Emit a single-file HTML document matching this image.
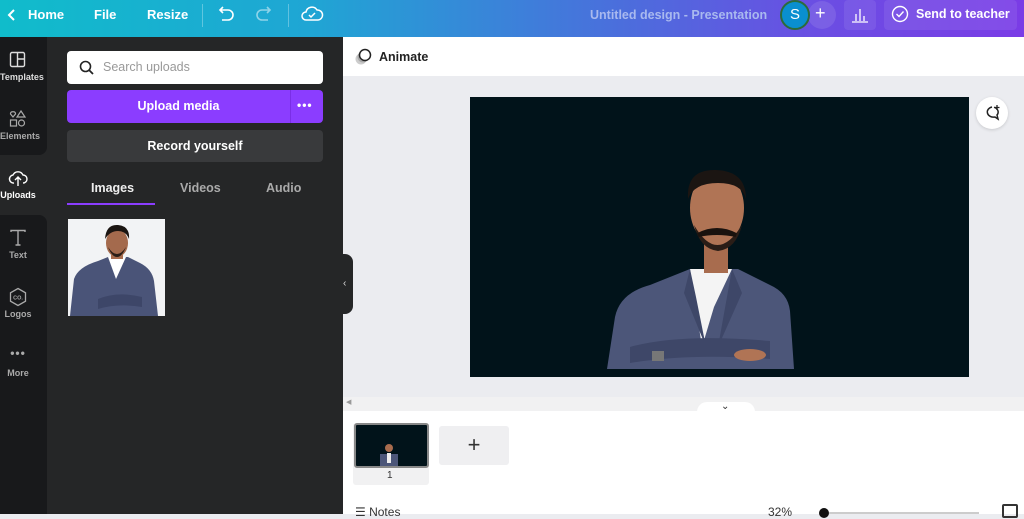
<!DOCTYPE html>
<html><head><meta charset="utf-8"><style>
*{margin:0;padding:0;box-sizing:border-box}
body{width:1024px;height:514px;overflow:hidden;font-family:"Liberation Sans",sans-serif;background:#ebecf0;position:relative}
.a{position:absolute}
.top{left:0;top:0;width:1024px;height:37px;background:linear-gradient(90deg,#10bccb 0%,#1fa6d4 30%,#4a6fdc 60%,#6b4ee3 80%,#7a3ce6 100%)}
.tt{color:#fff;font-weight:bold;font-size:13px;top:7px}
.rail{left:0;top:37px;width:47px;height:477px;background:#252627}
.rb{background:#18191b;left:0;width:47px}
.ri{left:0;width:36px;text-align:center;color:#ddd;font-size:9px;font-weight:bold;white-space:nowrap}
.panel{left:47px;top:37px;width:296px;height:477px;background:#252627}
</style></head><body>
<div class="a top"></div>
<svg class="a" style="left:5px;top:7px" width="12" height="16"><path d="M9 3 L4 8 L9 13" stroke="#fff" stroke-width="2" fill="none"/></svg>
<div class="a tt" style="left:28px">Home</div>
<div class="a tt" style="left:94px">File</div>
<div class="a tt" style="left:147px">Resize</div>
<div class="a" style="left:202px;top:4px;width:1px;height:23px;background:rgba(255,255,255,.3)"></div>
<div class="a" style="left:288px;top:4px;width:1px;height:23px;background:rgba(255,255,255,.3)"></div>
<svg class="a" style="left:216px;top:5px" width="20" height="18"><path d="M4 5 H12 A5 5 0 0 1 12 15 H6 M7 2 L4 5 L7 8" stroke="#fff" stroke-width="1.6" fill="none"/></svg>
<svg class="a" style="left:254px;top:5px" width="20" height="18"><path d="M16 5 H8 A5 5 0 0 0 8 15 H14 M13 2 L16 5 L13 8" stroke="rgba(255,255,255,.5)" stroke-width="1.6" fill="none"/></svg>
<svg class="a" style="left:300px;top:4px" width="24" height="20"><path d="M6 16 A4 4 0 0 1 6 8 A6 6 0 0 1 17 6 A5 5 0 0 1 18 16 Z M9 11 L11 13 L15 9" stroke="#fff" stroke-width="1.5" fill="none"/></svg>
<div class="a" style="left:590px;top:8px;color:#a9b9ef;font-size:12.5px;font-weight:bold">Untitled design - Presentation</div>
<div class="a" style="left:808px;top:1px;width:28px;height:28px;border-radius:50%;background:rgba(255,255,255,.1)"></div>
<div class="a" style="left:780px;top:0px;width:30px;height:30px;border-radius:50%;background:#0a8fd0;border:2px solid #2d6b3a;color:#fff;font-size:15px;text-align:center;line-height:26px">S</div>
<div class="a" style="left:815px;top:3px;color:#fff;font-size:18px">+</div>
<div class="a" style="left:844px;top:0;width:32px;height:30px;border-radius:4px;background:rgba(255,255,255,.08)"></div>
<svg class="a" style="left:850px;top:5px" width="20" height="20"><path d="M2 17 H18 M6 16 V9 M10 16 V4 M14 16 V11" stroke="#fff" stroke-width="1.3" fill="none"/></svg>
<div class="a" style="left:884px;top:0;width:133px;height:30px;border-radius:4px;background:rgba(255,255,255,.08)"></div>
<svg class="a" style="left:891px;top:5px" width="18" height="18"><circle cx="9" cy="9" r="7.5" stroke="#fff" stroke-width="1.4" fill="none"/><path d="M5.5 9 L8 11.5 L12.5 6.5" stroke="#fff" stroke-width="1.4" fill="none"/></svg>
<div class="a tt" style="left:916px;top:7px;font-size:12.5px">Send to teacher</div>

<div class="a rail"></div>
<div class="a rb" style="top:37px;height:118px;border-bottom-right-radius:8px"></div>
<div class="a rb" style="top:215px;height:299px;border-top-right-radius:8px"></div>
<svg class="a" style="left:9px;top:51px" width="18" height="18"><rect x="1.5" y="1.5" width="14" height="14" rx="1.5" stroke="#ddd" stroke-width="1.4" fill="none"/><path d="M8.5 1.5 V15.5 M8.5 8 H15.5" stroke="#ddd" stroke-width="1.4"/></svg>
<div class="a ri" style="top:72px">Templates</div>
<svg class="a" style="left:9px;top:110px" width="18" height="18"><path d="M4 7 L1.5 4 A2 2 0 0 1 4 1.8 A2 2 0 0 1 6.5 4 Z M12 1 L16 7 H8 Z" stroke="#aaa" stroke-width="1.2" fill="none"/><rect x="1.5" y="10" width="6" height="6" stroke="#aaa" stroke-width="1.2" fill="none"/><circle cx="12.5" cy="13" r="3" stroke="#aaa" stroke-width="1.2" fill="none"/></svg>
<div class="a ri" style="top:131px;color:#aaa">Elements</div>
<svg class="a" style="left:8px;top:169px" width="20" height="18"><path d="M6 14 A4 4 0 0 1 5 6 A5.5 5.5 0 0 1 15 6 A4 4 0 0 1 15 14 M10 17 V8 M7 11 L10 8 L13 11" stroke="#fff" stroke-width="1.4" fill="none"/></svg>
<div class="a ri" style="top:190px;color:#fff">Uploads</div>
<svg class="a" style="left:9px;top:229px" width="18" height="18"><path d="M2 3 V1.5 H16 V3 M9 1.5 V16 M6.5 16 H11.5" stroke="#aaa" stroke-width="1.4" fill="none"/></svg>
<div class="a ri" style="top:250px;color:#aaa">Text</div>
<svg class="a" style="left:8px;top:287px" width="20" height="20"><path d="M10 1.5 L17.5 5.8 V14.2 L10 18.5 L2.5 14.2 V5.8 Z" stroke="#aaa" stroke-width="1.3" fill="none"/><text x="10" y="12.5" font-size="5.5" fill="#aaa" text-anchor="middle" font-family="Liberation Sans" font-weight="bold">CO.</text></svg>
<div class="a ri" style="top:309px;color:#aaa">Logos</div>
<div class="a ri" style="top:346px;color:#aaa;font-size:12px;letter-spacing:1px">•••</div>
<div class="a ri" style="top:368px;color:#aaa">More</div>

<div class="a panel"></div>
<div class="a" style="left:67px;top:51px;width:256px;height:33px;background:#fff;border-radius:4px"></div>
<svg class="a" style="left:78px;top:59px" width="18" height="18"><circle cx="7.5" cy="7.5" r="5" stroke="#222" stroke-width="1.6" fill="none"/><path d="M11 11 L15 15" stroke="#222" stroke-width="1.8"/></svg>
<div class="a" style="left:103px;top:60px;color:#999;font-size:12.5px">Search uploads</div>
<div class="a" style="left:67px;top:90px;width:256px;height:33px;background:#8b3dff;border-radius:4px"></div>
<div class="a" style="left:290px;top:90px;width:1px;height:33px;background:#7a2ee6"></div>
<div class="a" style="left:67px;top:99px;width:223px;text-align:center;color:#fff;font-weight:bold;font-size:12.5px">Upload media</div>
<div class="a" style="left:297px;top:98px;color:#fff;font-weight:bold;font-size:12px;letter-spacing:1px">•••</div>
<div class="a" style="left:67px;top:130px;width:256px;height:32px;background:#393a3c;border-radius:4px;color:#fff;font-weight:bold;font-size:12.5px;text-align:center;line-height:32px">Record yourself</div>
<div class="a" style="left:91px;top:181px;color:#eee;font-weight:bold;font-size:12.5px">Images</div>
<div class="a" style="left:180px;top:181px;color:#aaa;font-weight:bold;font-size:12.5px">Videos</div>
<div class="a" style="left:266px;top:181px;color:#aaa;font-weight:bold;font-size:12.5px">Audio</div>
<div class="a" style="left:67px;top:203px;width:88px;height:2px;background:#8b3dff"></div>
<svg class="a" style="left:68px;top:219px" width="97" height="97" viewBox="0 0 97 97"><rect width="97" height="97" fill="#f2f3f5"/>
<path d="M2 97 L6 60 Q10 48 30 42 L40 38 H60 L72 44 Q84 50 86 62 L90 97 Z" fill="#4a5478"/>
<path d="M40 38 L48 60 L58 38 Z" fill="#fff"/>
<rect x="43" y="30" width="12" height="10" fill="#a86c4e"/>
<ellipse cx="49" cy="24" rx="11" ry="14" fill="#a46a4d"/>
<path d="M37 20 Q38 5 50 6 Q62 7 61 20 Q58 12 50 12 Q42 12 37 20Z" fill="#1b1512"/>
<path d="M40 28 Q49 42 58 28 Q54 38 49 38 Q44 38 40 28Z" fill="#2a1d17"/>
<path d="M30 80 Q50 72 74 78 L74 88 Q50 84 30 90Z" fill="#3d4668"/></svg>

<div class="a" style="left:343px;top:37px;width:681px;height:39px;background:#fff"></div>
<svg class="a" style="left:354px;top:48px" width="18" height="18"><circle cx="7" cy="11" r="5.5" fill="#ccc"/><circle cx="9" cy="9" r="5.5" fill="#aaa"/><circle cx="11" cy="7" r="5.5" fill="#fff" stroke="#222" stroke-width="1.5"/></svg>
<div class="a" style="left:379px;top:50px;color:#222;font-weight:bold;font-size:12.5px">Animate</div>
<div class="a" style="left:343px;top:254px;width:10px;height:60px;background:#252627;border-radius:0 8px 8px 0"></div>
<div class="a" style="left:343px;top:278px;color:#ddd;font-size:10px">‹</div>

<div class="a" style="left:470px;top:97px;width:499px;height:280px;background:#01131a;overflow:hidden">
<svg width="499" height="280" viewBox="0 0 499 280">
<path d="M137 272 L145 220 Q150 196 180 188 L220 172 H268 L300 188 Q318 196 320 214 L324 272 Z" fill="#4c5679"/>
<path d="M220 172 L232 250 L244 210 L262 172 Z" fill="#f4f4f4"/>
<path d="M220 172 L226 200 L236 250 L214 196Z M262 172 L248 250 L272 196Z" fill="#3e4768"/>
<rect x="234" y="140" width="24" height="36" fill="#a86c4e"/>
<ellipse cx="247" cy="111" rx="27" ry="37" fill="#b07455"/>
<path d="M218 102 Q216 72 246 73 Q276 74 276 102 Q272 86 248 86 Q224 86 218 102Z" fill="#1b1512"/>
<path d="M224 128 Q247 168 272 128 Q266 152 248 154 Q230 152 224 128Z" fill="#2a1d17"/>
<path d="M228 138 Q247 128 266 138 Q247 134 228 138Z" fill="#1a120e" stroke="#1a120e" stroke-width="4"/>
<path d="M160 250 Q210 236 300 244 L300 262 Q220 256 160 266Z" fill="#3e4768"/>
<ellipse cx="280" cy="258" rx="16" ry="6" fill="#b07455"/>
<rect x="182" y="254" width="12" height="10" fill="#777"/>
</svg></div>
<div class="a" style="left:976px;top:97px;width:32px;height:32px;border-radius:50%;background:#fff;box-shadow:0 1px 3px rgba(0,0,0,.15)"></div>
<svg class="a" style="left:983px;top:104px" width="18" height="18"><path d="M9 3 A6 5 0 1 0 12 13 L15 15 L14 11 A6 5 0 0 0 11 3.3" stroke="#222" stroke-width="1.5" fill="none"/><path d="M14 1 V6 M11.5 3.5 H16.5" stroke="#222" stroke-width="1.3"/></svg>

<div class="a" style="left:343px;top:397px;width:681px;height:14px;background:#f1f1f2"></div>
<div class="a" style="left:343px;top:411px;width:681px;height:103px;background:#fff"></div>
<div class="a" style="left:697px;top:402px;width:58px;height:12px;background:#fff;border-radius:10px 10px 0 0"></div>
<div class="a" style="left:721px;top:401px;color:#333;font-size:10px">⌄</div>
<div class="a" style="left:346px;top:398px;color:#999;font-size:7px">◀</div>
<div class="a" style="left:353px;top:423px;width:76px;height:62px;background:#f1f1f2;border-radius:3px"></div>
<div class="a" style="left:354px;top:423px;width:75px;height:45px;border:2px solid #888;border-radius:3px;background:#01131a"></div>
<svg class="a" style="left:374px;top:436px" width="30" height="30"><rect x="6" y="18" width="18" height="12" fill="#4c5679"/><circle cx="15" cy="12" r="4" fill="#a86c4e"/><rect x="13" y="17" width="4" height="10" fill="#eee"/></svg>
<div class="a" style="left:387px;top:470px;color:#333;font-size:10px">1</div>
<div class="a" style="left:439px;top:426px;width:70px;height:39px;background:#efeff1;border-radius:3px;text-align:center;line-height:37px;font-size:22px;color:#333">+</div>
<div class="a" style="left:355px;top:505px;color:#333;font-size:12px">☰ Notes</div>
<div class="a" style="left:768px;top:505px;color:#333;font-size:12px">32%</div>
<div class="a" style="left:819px;top:508px;width:10px;height:10px;border-radius:50%;background:#111"></div>
<div class="a" style="left:829px;top:512px;width:150px;height:2px;background:#ccc"></div>
<div class="a" style="left:1002px;top:504px;width:16px;height:14px;border:2px solid #333;border-radius:2px"></div>
</body></html>
